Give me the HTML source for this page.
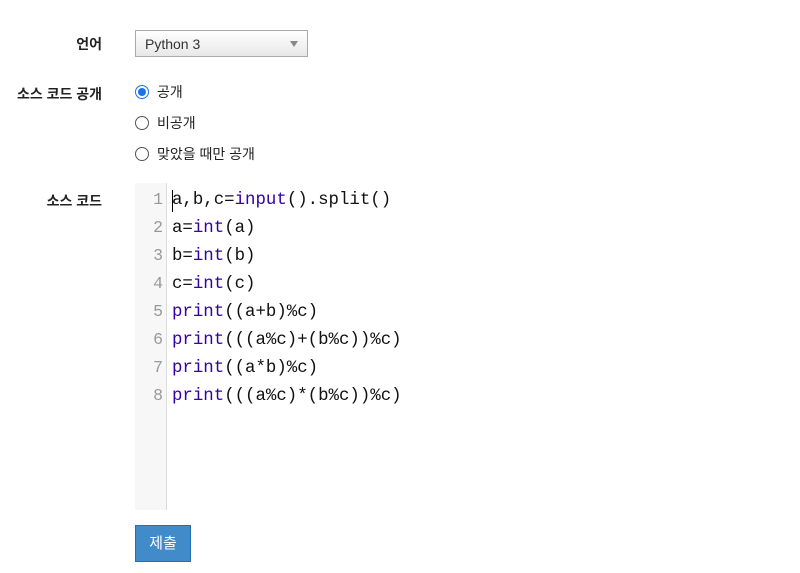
<!DOCTYPE html>
<html><head><meta charset="utf-8"><style>
body{margin:0;background:#fff;width:800px;height:573px;overflow:hidden;font-family:"Liberation Sans","Noto Sans CJK KR",sans-serif;color:#333;position:relative}
.lbl{position:absolute;right:698px;font-size:14px;font-weight:bold;color:#222;white-space:nowrap}
.sel{position:absolute;left:135px;top:30px;width:173px;height:27px;border:1px solid #aaa;box-sizing:border-box;background:linear-gradient(#fff,#e8e8e8);font-size:14px;line-height:26px;padding-left:9px;color:#333}
.sel .ar{position:absolute;right:9px;top:10px;width:0;height:0;border-left:4px solid transparent;border-right:4px solid transparent;border-top:6px solid #888}
.rad{position:absolute;left:135px;font-size:14px;color:#222}
.rad i{position:absolute;left:0;top:0;width:14px;height:14px;border:1px solid #555;border-radius:50%;box-sizing:border-box;background:#fff}
.rad i.on{border:1px solid #1a73e8}
.rad i.on:after{content:"";position:absolute;left:2px;top:2px;width:8px;height:8px;border-radius:50%;background:#1a73e8}
.rad span{position:absolute;left:22px;top:-3px;white-space:nowrap}
.ed{position:absolute;left:135px;top:183px;width:300px;height:327px}
.gut{position:absolute;left:0;top:0;width:31px;height:327px;background:#f7f7f7;border-right:1px solid #ddd}
.ln{position:absolute;left:0;width:28px;text-align:right;color:#999;font-family:"Liberation Mono",monospace;font-size:16.5px}
.cl{position:absolute;left:37px;font-family:"Liberation Mono",monospace;font-size:17.4px;color:#111;white-space:pre}
.k{color:#30a}
.cur{position:absolute;left:37px;top:7px;width:1px;height:22px;background:#000}
.btn{position:absolute;left:135px;top:525px;width:56px;height:37px;background:#428bca;border:1px solid #2a6fad;box-sizing:border-box;color:#fff;font-size:15px;line-height:35px;text-align:center}
</style></head><body>
<div class="lbl" style="top:34px">언어</div>
<div class="sel">Python 3<div class="ar"></div></div>
<div class="lbl" style="top:84px">소스 코드 공개</div>
<div class="rad" style="top:85px"><i class="on"></i><span>공개</span></div>
<div class="rad" style="top:116px"><i></i><span>비공개</span></div>
<div class="rad" style="top:147px"><i></i><span>맞았을 때만 공개</span></div>
<div class="lbl" style="top:191px">소스 코드</div>
<div class="ed">
<div class="gut"></div>
<div class="ln" style="top:7px">1</div><div class="cl" style="top:8px">a,b,c=<span class="k">input</span>().split()</div>
<div class="ln" style="top:35px">2</div><div class="cl" style="top:36px">a=<span class="k">int</span>(a)</div>
<div class="ln" style="top:63px">3</div><div class="cl" style="top:64px">b=<span class="k">int</span>(b)</div>
<div class="ln" style="top:91px">4</div><div class="cl" style="top:92px">c=<span class="k">int</span>(c)</div>
<div class="ln" style="top:119px">5</div><div class="cl" style="top:120px"><span class="k">print</span>((a+b)%c)</div>
<div class="ln" style="top:147px">6</div><div class="cl" style="top:148px"><span class="k">print</span>(((a%c)+(b%c))%c)</div>
<div class="ln" style="top:175px">7</div><div class="cl" style="top:176px"><span class="k">print</span>((a*b)%c)</div>
<div class="ln" style="top:203px">8</div><div class="cl" style="top:204px"><span class="k">print</span>(((a%c)*(b%c))%c)</div>
<div class="cur"></div>
</div>
<div class="btn">제출</div>
</body></html>
